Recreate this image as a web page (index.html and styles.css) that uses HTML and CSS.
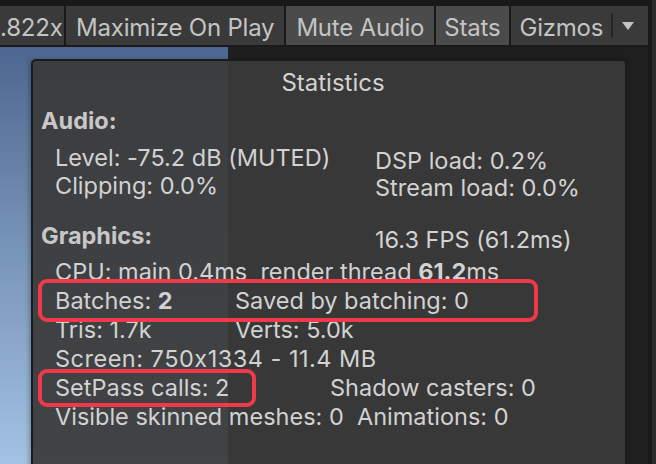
FILE: index.html
```html
<!DOCTYPE html>
<html>
  <head>
    <title>Game view stats</title>
    <link rel="stylesheet" href="styles.css">
  </head>
  <body>
    <div class="window">
      <div class="main">
        <div class="toolbar">
          <div class="tb-btn tb-scale">.822x</div>
          <div class="tb-btn">Maximize On Play</div>
          <div class="tb-btn on">Mute Audio</div>
          <div class="tb-btn on tb-stats">Stats</div>
          <div class="tb-btn tb-gizmos">
            <span>Gizmos</span>
            <span class="tb-sep"></span>
            <svg class="tb-arrow" width="12" height="8" viewBox="0 0 12 8"><path d="M0 0h12L6 8z" fill="#c4c4c4"/></svg>
          </div>
        </div>
        <div class="view">
          <div class="stats">
            <div class="stats-title">Statistics</div>

            <div class="section">Audio:</div>
            <div class="audio">
              <div class="col">
                <div>Level: -75.2 dB (MUTED)</div>
                <div>Clipping: 0.0%</div>
              </div>
              <div class="col-right">
                <div>DSP load: 0.2%</div>
                <div>Stream load: 0.0%</div>
              </div>
            </div>

            <div class="graphics-head">
              <div class="section">Graphics:</div>
              <div class="fps">16.3 FPS (61.2ms)</div>
            </div>
            <div class="graphics">
              <div>CPU: main 0.4ms&nbsp; render thread <b>61.2</b>ms</div>
              <div class="pair"><span>Batches: <b>2</b></span><span>Saved by batching: 0</span></div>
              <div class="pair"><span>Tris: 1.7k</span><span>Verts: 5.0k</span></div>
              <div class="screen">Screen: 750x1334 - 11.4 MB</div>
              <div class="pair wide"><span>SetPass calls: 2</span><span>Shadow casters: 0</span></div>
              <div>Visible skinned meshes: 0&nbsp; Animations: 0</div>
            </div>
          </div>
          <div class="mark mark-batches"></div>
          <div class="mark mark-setpass"></div>
        </div>
      </div>
      <div class="edge"></div>
    </div>
  </body>
</html>
```

FILE: styles.css
```css
html, body {
  margin: 0;
  height: 100%;
  overflow: hidden;
  background: #1f1f1f;
  font-family: Inter, "Noto Sans", sans-serif;
  font-feature-settings: "calt" 0;
}
.window {
  display: flex;
  height: 464px;
}
.main {
  display: flex;
  flex-direction: column;
  width: 648px;
}
.edge {
  flex: 1;
  border-left: 4px solid #1a1a1a;
  background: #2b2b2b;
}

/* toolbar */
.toolbar {
  display: flex;
  gap: 2px;
  height: 39px;
  padding: 6px 0 2px;
  background: #191919;
}
.tb-btn {
  display: flex;
  align-items: center;
  padding: 3px 10px 0;
  background: #3a3a3a;
  color: #c4c4c4;
  font-size: 24px;
  letter-spacing: -0.2px;
  white-space: nowrap;
}
.tb-btn.on {
  background: #4b4b4b;
}
.tb-scale {
  width: 64px;
  padding-left: 0;
  padding-right: 0;
  box-sizing: border-box;
}
.tb-stats {
  padding-left: 8px;
  padding-right: 9px;
}
.tb-gizmos {
  flex: 1;
  padding-left: 8px;
  padding-right: 8px;
}
.tb-sep {
  width: 2px;
  height: 24px;
  margin: -3px 9px 0 auto;
  background: #262626;
}
.tb-arrow {
  margin: -3px 6px 0 0;
}

/* game view */
.view {
  position: relative;
  flex: 1;
  overflow: hidden;
  padding: 12px 0 0 31px;
  background:
    linear-gradient(to bottom, #4d6890, #a4c2e4) 0 0 / 228px 100% no-repeat,
    #1f1f1f;
}
.stats {
  width: 596px;
  height: 460px;
  padding: 8px 0 0 8px;
  box-sizing: border-box;
  border: 2px solid #1b1b1b;
  border-radius: 5px;
  background: rgba(58, 58, 58, 0.94);
  box-shadow: -2px 0 4px rgba(0, 0, 0, 0.25);
  color: #d2d2d2;
  font-size: 23.5px;
  line-height: 28px;
}
.stats b {
  font-weight: 700;
}
.stats-title {
  text-align: center;
  margin-bottom: 10px;
  font-size: 24px;
}
.section {
  font-weight: 700;
  color: #c8c8c8;
}
.audio {
  display: flex;
  margin: 9px 0 0 14px;
}
.audio .col {
  flex: none;
  width: 320px;
}
.audio .col-right {
  margin-top: 3px;
  line-height: 27px;
}
.graphics-head {
  display: flex;
  margin-top: 21px;
}
.graphics-head .section {
  width: 334px;
}
.fps {
  margin-top: 4px;
}
.graphics {
  margin: 3px 0 0 14px;
  line-height: 29px;
}
.screen {
  letter-spacing: 0.5px;
}
.pair {
  display: grid;
  grid-template-columns: 180px auto;
}
.pair.wide {
  grid-template-columns: 275px auto;
}

/* red highlight annotations */
.mark {
  position: absolute;
  border: 4px solid #f03a4a;
  border-radius: 9px;
}
.mark-batches {
  left: 38px;
  top: 232px;
  width: 492px;
  height: 35px;
}
.mark-setpass {
  left: 38px;
  top: 322px;
  width: 210px;
  height: 30px;
}
```
